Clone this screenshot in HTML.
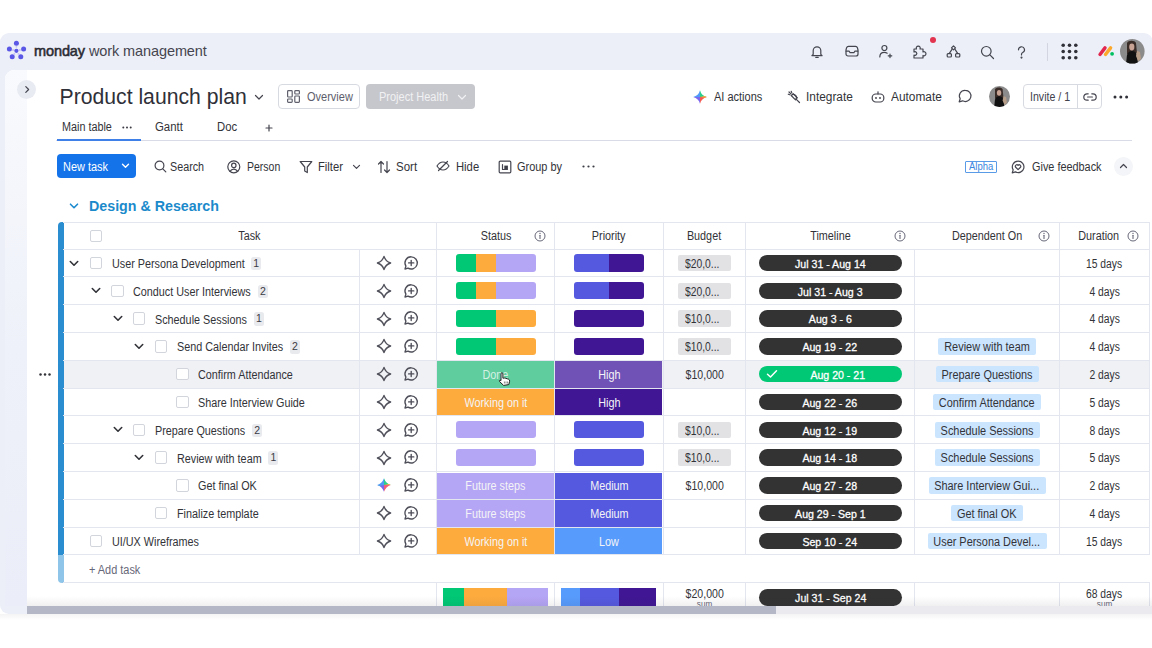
<!DOCTYPE html>
<html><head><meta charset="utf-8">
<style>
*{box-sizing:border-box;margin:0;padding:0}
html,body{width:1152px;height:648px;overflow:hidden;background:#fff;font-family:"Liberation Sans",sans-serif;color:#323338}
.a{position:absolute}
.t{position:absolute;white-space:nowrap;font-size:12px;line-height:14px}
svg{position:absolute;overflow:visible}
.ic{fill:none;stroke:#44454f;stroke-width:1.2;stroke-linecap:round;stroke-linejoin:round}
#frame{position:absolute;left:0;top:33px;width:1153px;height:581px;background:#eceff8;border-radius:9px}
#panel{position:absolute;left:5px;top:70px;width:1148px;height:536px;background:#fff;border-radius:9px 0 0 0;overflow:hidden}
#side{position:absolute;left:0;top:0;width:22px;height:536px;background:linear-gradient(180deg,#f9fafd 0,#f3f5fb 150px,#eef1f9 280px,#ebeef8 100%)}
.btn{position:absolute;border:1px solid #d8dae2;border-radius:4px;height:24.6px}
.hi{position:absolute;white-space:nowrap;font-size:12.5px;line-height:16px;color:#323338;transform:scaleX(.88);transform-origin:0 50%}
</style></head><body>
<div id="frame"></div>
<div id="panel"><div id="side"></div></div>

<!-- ===== top bar ===== -->
<svg style="left:6px;top:40px" width="22" height="22" viewBox="0 0 22 22">
  <g fill="#5b57e6"><circle cx="10.4" cy="3.3" r="2.5"/><circle cx="3.4" cy="8.9" r="2.5"/><circle cx="17.6" cy="8.9" r="2.5"/><circle cx="6.2" cy="16.8" r="2.5"/><circle cx="14.8" cy="16.8" r="2.5"/><circle cx="10.4" cy="10.8" r="2.1"/></g>
  <g fill="#b3acf5" opacity=".7"><circle cx="7" cy="10" r="1"/><circle cx="13.8" cy="10" r="1"/><circle cx="10.4" cy="6.8" r=".9"/><circle cx="8.3" cy="13.9" r=".9"/><circle cx="12.5" cy="13.9" r=".9"/></g>
</svg>
<div class="t" style="left:34px;top:42.5px;font-size:14.5px;line-height:17px;letter-spacing:-0.1px"><span style="color:#2b2b33;-webkit-text-stroke:0.55px #2b2b33">monday</span> <span style="color:#45454f">work management</span></div>

<svg style="left:810px;top:43.8px" width="14" height="15" viewBox="0 0 14 15" class="ic"><path d="M3.2 10.3V6.6a3.8 3.8 0 0 1 7.6 0v3.7l1.3 1.3H1.9z"/><path d="M5.8 13.4h2.4"/></svg>
<svg style="left:844.5px;top:45px" width="14" height="12" viewBox="0 0 14 12" class="ic"><path d="M3.5 1.3h7a2 2 0 0 1 1.9 1.4L13 5v4a2 2 0 0 1-2 2H3a2 2 0 0 1-2-2V5l.6-2.3a2 2 0 0 1 1.9-1.4z"/><path d="M1.2 6.2h3l.9 1.5h3.8l.9-1.5h3"/></svg>
<svg style="left:878px;top:43.8px" width="15" height="15" viewBox="0 0 15 15" class="ic"><circle cx="6.4" cy="4" r="2.5"/><path d="M1.8 13c0-2.8 2-4.6 4.6-4.6 1.1 0 2 .3 2.8.8"/><path d="M10.2 11.8h3.6M12 10v3.6"/></svg>
<svg style="left:912px;top:43.8px" width="15" height="15" viewBox="0 0 15 15" class="ic"><path d="M2 5h2.5a2 2 0 1 1 3.5 0H11v3a2 2 0 1 1 0 3.5V14H2v-3a1.8 1.8 0 1 0 0-3z"/></svg>
<div class="a" style="left:929.6px;top:37.3px;width:6.2px;height:6.2px;border-radius:3.1px;background:#e2334f"></div>
<svg style="left:946px;top:43.8px" width="15" height="15" viewBox="0 0 15 15" class="ic"><path d="M7.5 1.8l2 2-2 2-2-2z"/><path d="M6 5.3L3.3 9.3M9 5.3l2.7 4"/><rect x="1.2" y="9.6" width="4.2" height="3.4" rx=".9"/><rect x="9.6" y="9.6" width="4.2" height="3.4" rx=".9"/></svg>
<svg style="left:980px;top:44.5px" width="15" height="15" viewBox="0 0 15 15" class="ic"><circle cx="6.3" cy="6.3" r="4.8"/><path d="M9.9 9.9l3.6 3.6"/></svg>
<svg style="left:1015.5px;top:45.5px" width="11" height="13" viewBox="0 0 11 13" class="ic"><path d="M2.5 3.8a3 3 0 1 1 4.2 2.7c-.8.4-1.2.9-1.2 1.8v.7"/><circle cx="5.5" cy="11.6" r=".45" fill="#44454f"/></svg>
<div class="a" style="left:1046.5px;top:43px;width:1px;height:18px;background:#d3d6e0"></div>
<svg style="left:1060.5px;top:43px" width="17" height="17" viewBox="0 0 17 17"><g fill="#2f3038"><circle cx="2.2" cy="2.2" r="1.8"/><circle cx="8.5" cy="2.2" r="1.8"/><circle cx="14.8" cy="2.2" r="1.8"/><circle cx="2.2" cy="8.5" r="1.8"/><circle cx="8.5" cy="8.5" r="1.8"/><circle cx="14.8" cy="8.5" r="1.8"/><circle cx="2.2" cy="14.8" r="1.8"/><circle cx="8.5" cy="14.8" r="1.8"/><circle cx="14.8" cy="14.8" r="1.8"/></g></svg>
<svg style="left:1096px;top:44px" width="20" height="13" viewBox="0 0 20 13"><path d="M4 10.5L9 3.9" stroke="#e2274f" stroke-width="3.4" stroke-linecap="round"/><path d="M9.5 10.5L14.6 3.9" stroke="#fca82c" stroke-width="3.4" stroke-linecap="round"/><circle cx="16.1" cy="9.8" r="1.9" fill="#00c061"/></svg>
<svg style="left:1120.3px;top:39px" width="24.6" height="24.6" viewBox="0 0 24.6 24.6"><defs><clipPath id="av1"><circle cx="12.3" cy="12.3" r="12.3"/></clipPath></defs><g clip-path="url(#av1)"><rect width="25" height="25" fill="#8c8b8b"/><path d="M7 4c1-3 8-3 9 0l1 10-10 1z" fill="#3a2d28"/><ellipse cx="11.8" cy="8" rx="2.6" ry="3.4" fill="#c9a394"/><path d="M6 25l1-9c1-3 3-4 5-4s4 1 5 4l1 9z" fill="#111"/><path d="M17 12l3 1 1 7-3 2-2-5z" fill="#b79e88"/></g></svg>

<!-- ===== board header ===== -->
<div class="a" style="left:16.5px;top:79.5px;width:19.5px;height:19.5px;border-radius:50%;background:#e9ebf3"></div>
<svg style="left:22.5px;top:85px" width="8" height="9" viewBox="0 0 8 9" class="ic"><path d="M2.8 1.6l2.8 2.9-2.8 2.9"/></svg>
<div class="t" style="left:59.5px;top:83.5px;font-size:21.2px;line-height:25px;color:#2f3038">Product launch plan</div>
<svg style="left:254px;top:93.5px" width="10" height="7" viewBox="0 0 10 7" class="ic"><path d="M1.5 1.5l3.5 3.5 3.5-3.5"/></svg>

<div class="btn" style="left:278.2px;top:84px;width:81.5px"></div>
<svg style="left:286.8px;top:89.8px;stroke:#5f606c" width="13" height="13" viewBox="0 0 13 13" class="ic"><rect x=".6" y=".6" width="4.6" height="6.4" rx=".8"/><rect x=".6" y="9" width="4.6" height="3.4" rx=".8"/><rect x="7.8" y=".6" width="4.6" height="3.4" rx=".8"/><rect x="7.8" y="6" width="4.6" height="6.4" rx=".8"/></svg>
<div class="hi" style="left:307.4px;top:88.5px;color:#5d5e6c;transform:scaleX(.88)">Overview</div>

<div class="a" style="left:366px;top:84px;width:109px;height:24.6px;border-radius:4px;background:#c6c7cc"></div>
<div class="hi" style="left:378.5px;top:88.5px;color:#f1f1f3">Project Health</div>
<svg style="left:456.5px;top:93.5px;stroke:#f1f1f3" width="10" height="7" viewBox="0 0 10 7" class="ic"><path d="M1.5 1.5l3.5 3.5 3.5-3.5"/></svg>

<svg style="left:692.5px;top:89.5px" width="14" height="14" viewBox="0 0 14 14"><defs><clipPath id="aist"><path d="M7 0.2Q8.4 5.6 13.8 7 8.4 8.4 7 13.8 5.6 8.4 0.2 7 5.6 5.6 7 0.2z"/></clipPath></defs><g clip-path="url(#aist)"><rect x="0" y="0" width="7" height="7" fill="#4f9bf5"/><rect x="7" y="0" width="7" height="7" fill="#2ccf8e"/><rect x="7" y="7" width="7" height="7" fill="#f25a55"/><rect x="0" y="7" width="7" height="7" fill="#7d66ee"/><path d="M7 7L14 5.5V8z" fill="#ffa53a"/></g></svg>
<div class="hi" style="left:713.5px;top:88.5px">AI actions</div>
<svg style="left:786.5px;top:89.5px" width="14" height="14" viewBox="0 0 14 14" class="ic"><path d="M4.2 5.5l4.3 4.3a3.1 3.1 0 0 0 .3-4.1L8.3 5.2a3.1 3.1 0 0 0-4.1.3z"/><path d="M6.1 3.6l4.3 4.3M9.3 9.3l3.2 3.2M2 2l1.7 1.7M4.2 1.3l.6 1.6M1.3 4.2l1.6.6"/></svg>
<div class="hi" style="left:806px;top:88.5px;transform:scaleX(.95)">Integrate</div>
<svg style="left:870.5px;top:89.5px" width="14" height="14" viewBox="0 0 14 14" class="ic"><rect x="1.2" y="4" width="11.6" height="8" rx="3.6"/><path d="M7 4V1.8"/><circle cx="5" cy="8" r=".9" fill="#3b3c45" stroke="none"/><circle cx="9" cy="8" r=".9" fill="#3b3c45" stroke="none"/></svg>
<div class="hi" style="left:890.5px;top:88.5px;transform:scaleX(.95)">Automate</div>
<svg style="left:957.5px;top:89px" width="14" height="14" viewBox="0 0 14 14" class="ic"><path d="M7.3 1.3a5.6 5.6 0 1 1-2.7 10.5L1.2 12.8l1-3a5.6 5.6 0 0 1 5.1-8.5z"/></svg>
<svg style="left:988.5px;top:85.5px" width="21" height="21" viewBox="0 0 24.6 24.6"><defs><clipPath id="av2"><circle cx="12.3" cy="12.3" r="12.3"/></clipPath></defs><g clip-path="url(#av2)"><rect width="25" height="25" fill="#8c8b8b"/><path d="M7 4c1-3 8-3 9 0l1 10-10 1z" fill="#3a2d28"/><ellipse cx="11.8" cy="8" rx="2.6" ry="3.4" fill="#c9a394"/><path d="M6 25l1-9c1-3 3-4 5-4s4 1 5 4l1 9z" fill="#111"/><path d="M17 12l3 1 1 7-3 2-2-5z" fill="#b79e88"/></g></svg>

<div class="btn" style="left:1023px;top:84px;width:79px"></div>
<div class="a" style="left:1077px;top:84.5px;width:1px;height:23.6px;background:#d8dae2"></div>
<div class="hi" style="left:1030px;top:88.5px;transform:scaleX(.85);color:#41424c">Invite / 1</div>
<svg style="left:1082.5px;top:90.5px" width="14" height="12" viewBox="0 0 14 12" class="ic"><path d="M5.2 2.8H4a3.2 3.2 0 0 0 0 6.4h1.2M8.8 2.8H10a3.2 3.2 0 0 1 0 6.4H8.8M4.6 6h4.8"/></svg>
<svg style="left:1112.5px;top:94.5px" width="16" height="4" viewBox="0 0 16 4"><g fill="#2f3038"><circle cx="2" cy="2" r="1.5"/><circle cx="7.8" cy="2" r="1.5"/><circle cx="13.6" cy="2" r="1.5"/></g></svg>

<!-- tabs -->
<div class="hi" style="left:62px;top:119px;font-size:12px;transform:scaleX(.9)">Main table</div>
<svg style="left:121.5px;top:125.5px" width="10" height="3" viewBox="0 0 10 3"><g fill="#3b3c45"><circle cx="1.3" cy="1.5" r="1"/><circle cx="5" cy="1.5" r="1"/><circle cx="8.7" cy="1.5" r="1"/></g></svg>
<div class="hi" style="left:155px;top:119px;font-size:12px;transform:scaleX(.95)">Gantt</div>
<div class="hi" style="left:217px;top:119px;font-size:12px;transform:scaleX(.94)">Doc</div>
<svg style="left:264.5px;top:123.5px" width="8" height="8" viewBox="0 0 8 8" class="ic"><path d="M4 1v6M1 4h6"/></svg>
<div class="a" style="left:56px;top:140px;width:1076px;height:1px;background:#d9dce6"></div>
<div class="a" style="left:56.5px;top:139.2px;width:84.5px;height:2px;background:#3f80e8"></div>

<!-- toolbar -->
<div class="a" style="left:56.5px;top:153.7px;width:79px;height:24.3px;border-radius:4px;background:#1573e9"></div>
<div class="hi" style="left:63px;top:159px;color:#fff;transform:scaleX(.875)">New task</div>
<svg style="left:120.5px;top:163px;stroke:#fff;stroke-width:1.4" width="9" height="6" viewBox="0 0 9 6" class="ic"><path d="M1.5 1.3l3 3 3-3"/></svg>
<svg style="left:153.5px;top:159.5px" width="13" height="13" viewBox="0 0 13 13" class="ic"><circle cx="5.5" cy="5.5" r="4.4"/><path d="M8.8 8.8l3 3"/></svg>
<div class="hi" style="left:170.3px;top:159px;transform:scaleX(.86)">Search</div>
<svg style="left:226.5px;top:159.5px" width="14" height="14" viewBox="0 0 14 14" class="ic"><circle cx="6.8" cy="6.8" r="6"/><circle cx="6.8" cy="5.4" r="2.2"/><path d="M3 11.4c1-1.6 2.3-2.3 3.8-2.3s2.8.7 3.8 2.3"/></svg>
<div class="hi" style="left:246.6px;top:159px;transform:scaleX(.84)">Person</div>
<svg style="left:298.5px;top:159.5px" width="14" height="14" viewBox="0 0 14 14" class="ic"><path d="M1.2 1.5h11.6L8.3 7v5.6L5.7 11V7z"/></svg>
<div class="hi" style="left:318.2px;top:159px;transform:scaleX(.9)">Filter</div>
<svg style="left:351.5px;top:164px" width="9" height="6" viewBox="0 0 9 6" class="ic"><path d="M1.5 1.3l3 3 3-3"/></svg>
<svg style="left:376.5px;top:159.5px" width="14" height="14" viewBox="0 0 14 14" class="ic"><path d="M4 12.5V1.5M1.5 4L4 1.5 6.5 4M10 1.5v11M7.5 10l2.5 2.5 2.5-2.5"/></svg>
<div class="hi" style="left:395.5px;top:159px;transform:scaleX(.92)">Sort</div>
<svg style="left:435.5px;top:160px" width="14" height="12" viewBox="0 0 14 12" class="ic"><path d="M1 6c1.6-2.6 3.6-4 6-4s4.4 1.4 6 4c-1.6 2.6-3.6 4-6 4S2.6 8.6 1 6z"/><path d="M2.5 10.5L11.5 1.5"/></svg>
<div class="hi" style="left:455.5px;top:159px;transform:scaleX(.9)">Hide</div>
<svg style="left:498px;top:159.5px" width="14" height="14" viewBox="0 0 14 14" class="ic"><rect x="1.2" y="1.2" width="11.6" height="11.6" rx="1"/><path d="M4.5 4.5v5h5"/><rect x="6.3" y="5.6" width="3.6" height="3.4" fill="#3b3c45" stroke="none"/></svg>
<div class="hi" style="left:516.5px;top:159px;transform:scaleX(.875)">Group by</div>
<svg style="left:581.5px;top:165px" width="13" height="3" viewBox="0 0 13 3"><g fill="#3b3c45"><circle cx="1.5" cy="1.5" r="1.1"/><circle cx="6.5" cy="1.5" r="1.1"/><circle cx="11.5" cy="1.5" r="1.1"/></g></svg>

<div class="a" style="left:965px;top:160.5px;width:31.5px;height:12.5px;border:1px solid #5a9be8;border-radius:1px"></div>
<div class="t" style="left:969px;top:161px;font-size:10.5px;line-height:11px;color:#3b86e0;transform:scaleX(.9);transform-origin:0 50%">Alpha</div>
<svg style="left:1010.5px;top:159.5px" width="14" height="14" viewBox="0 0 14 14" class="ic"><path d="M7.2 1.2a5.7 5.7 0 1 1-2.7 10.7L1.2 12.9l1-3a5.7 5.7 0 0 1 5-8.7z"/><path d="M7.1 9.6L4.7 7.3a1.5 1.5 0 0 1 2.4-1.9 1.5 1.5 0 0 1 2.4 1.9z"/></svg>
<div class="hi" style="left:1032px;top:159px;transform:scaleX(.87)">Give feedback</div>
<div class="a" style="left:1113.5px;top:156.5px;width:19.5px;height:19.5px;border-radius:50%;background:#f4f5f8"></div>
<svg style="left:1119px;top:163px" width="9" height="6" viewBox="0 0 9 6" class="ic"><path d="M1.5 4.5l3-3 3 3"/></svg>

<!-- group title -->
<svg style="left:68.5px;top:203px;stroke:#1d8bcf;stroke-width:1.6" width="10" height="6" viewBox="0 0 10 6" class="ic"><path d="M1.5 1.2l3.5 3.5 3.5-3.5"/></svg>
<div class="t" style="left:89px;top:196.5px;font-size:15px;line-height:18px;color:#1b8acb;font-weight:bold;transform:scaleX(.95);transform-origin:0 50%">Design &amp; Research</div>

<div class="a" style="left:63px;top:360.3px;width:1086px;height:27.8px;background:#f0f1f5;"></div>
<svg style="left:39px;top:372.7px" width="12" height="3" viewBox="0 0 12 3"><g fill="#323338"><circle cx="1.5" cy="1.5" r="1.25"/><circle cx="6" cy="1.5" r="1.25"/><circle cx="10.5" cy="1.5" r="1.25"/></g></svg>
<div class="a" style="left:58px;top:222.3px;width:5.5px;height:332.6px;background:#2a8dd0;border-radius:4px 0 0 0"></div>
<div class="a" style="left:58px;top:554.9px;width:5.5px;height:27.8px;background:#8ec5e8;border-radius:0 0 0 4px"></div>
<div class="a" style="left:63px;top:221.8px;width:1087px;height:1px;background:#e3e6ee;"></div>
<div class="a" style="left:63px;top:248.6px;width:1087px;height:1px;background:#e3e6ee;"></div>
<div class="a" style="left:63px;top:276.4px;width:1087px;height:1px;background:#e3e6ee;"></div>
<div class="a" style="left:63px;top:304.2px;width:1087px;height:1px;background:#e3e6ee;"></div>
<div class="a" style="left:63px;top:332px;width:1087px;height:1px;background:#e3e6ee;"></div>
<div class="a" style="left:63px;top:359.8px;width:1087px;height:1px;background:#e3e6ee;"></div>
<div class="a" style="left:63px;top:387.6px;width:1087px;height:1px;background:#e3e6ee;"></div>
<div class="a" style="left:63px;top:415.4px;width:1087px;height:1px;background:#e3e6ee;"></div>
<div class="a" style="left:63px;top:443.2px;width:1087px;height:1px;background:#e3e6ee;"></div>
<div class="a" style="left:63px;top:471px;width:1087px;height:1px;background:#e3e6ee;"></div>
<div class="a" style="left:63px;top:498.8px;width:1087px;height:1px;background:#e3e6ee;"></div>
<div class="a" style="left:63px;top:526.6px;width:1087px;height:1px;background:#e3e6ee;"></div>
<div class="a" style="left:63px;top:554.4px;width:1087px;height:1px;background:#e3e6ee;"></div>
<div class="a" style="left:63px;top:582.2px;width:1087px;height:1px;background:#e3e6ee;"></div>
<div class="a" style="left:436px;top:222.3px;width:1px;height:332.6px;background:#e3e6ee;"></div>
<div class="a" style="left:554.1px;top:222.3px;width:1px;height:332.6px;background:#e3e6ee;"></div>
<div class="a" style="left:662.6px;top:222.3px;width:1px;height:332.6px;background:#e3e6ee;"></div>
<div class="a" style="left:745.2px;top:222.3px;width:1px;height:332.6px;background:#e3e6ee;"></div>
<div class="a" style="left:914.3px;top:249.1px;width:1px;height:305.8px;background:#e3e6ee;"></div>
<div class="a" style="left:1059.2px;top:222.3px;width:1px;height:332.6px;background:#e3e6ee;"></div>
<div class="a" style="left:1148.5px;top:222.3px;width:1px;height:332.6px;background:#e3e6ee;"></div>
<div class="a" style="left:359.3px;top:249.1px;width:1px;height:305.8px;background:#e3e6ee;"></div>
<div class="a" style="left:436px;top:582.7px;width:1px;height:23.3px;background:#e3e6ee;"></div>
<div class="a" style="left:554.1px;top:582.7px;width:1px;height:23.3px;background:#e3e6ee;"></div>
<div class="a" style="left:662.6px;top:582.7px;width:1px;height:23.3px;background:#e3e6ee;"></div>
<div class="a" style="left:745.2px;top:582.7px;width:1px;height:23.3px;background:#e3e6ee;"></div>
<div class="a" style="left:914.3px;top:582.7px;width:1px;height:23.3px;background:#e3e6ee;"></div>
<div class="a" style="left:1059.2px;top:582.7px;width:1px;height:23.3px;background:#e3e6ee;"></div>
<div class="a" style="left:1148.5px;top:582.7px;width:1px;height:23.3px;background:#e3e6ee;"></div>
<div class="a" style="left:89.6px;top:229.8px;width:12.4px;height:12.4px;border:1px solid #d3d5dd;border-radius:2px;background:#fff"></div>
<div class="t" style="left:99.75px;top:228px;width:300px;text-align:center;font-size:12px;line-height:16px;color:#323338;font-weight:normal;"><span style="display:inline-block;transform:scaleX(0.9)">Task</span></div>
<div class="t" style="left:345.6px;top:228px;width:300px;text-align:center;font-size:12px;line-height:16px;color:#323338;font-weight:normal;"><span style="display:inline-block;transform:scaleX(0.9)">Status</span></div>
<svg style="left:533.6px;top:230px" width="12" height="12" viewBox="0 0 12 12"><circle cx="6" cy="6" r="5" fill="none" stroke="#676879" stroke-width="1"/><path d="M6 5.2v3.3" stroke="#676879" stroke-width="1.1" stroke-linecap="round"/><circle cx="6" cy="3.4" r=".7" fill="#676879"/></svg>
<div class="t" style="left:458.85px;top:228px;width:300px;text-align:center;font-size:12px;line-height:16px;color:#323338;font-weight:normal;"><span style="display:inline-block;transform:scaleX(0.9)">Priority</span></div>
<div class="t" style="left:554.4px;top:228px;width:300px;text-align:center;font-size:12px;line-height:16px;color:#323338;font-weight:normal;"><span style="display:inline-block;transform:scaleX(0.9)">Budget</span></div>
<div class="t" style="left:680.2px;top:228px;width:300px;text-align:center;font-size:12px;line-height:16px;color:#323338;font-weight:normal;"><span style="display:inline-block;transform:scaleX(0.9)">Timeline</span></div>
<svg style="left:893.6px;top:230px" width="12" height="12" viewBox="0 0 12 12"><circle cx="6" cy="6" r="5" fill="none" stroke="#676879" stroke-width="1"/><path d="M6 5.2v3.3" stroke="#676879" stroke-width="1.1" stroke-linecap="round"/><circle cx="6" cy="3.4" r=".7" fill="#676879"/></svg>
<div class="t" style="left:836.9px;top:228px;width:300px;text-align:center;font-size:12px;line-height:16px;color:#323338;font-weight:normal;"><span style="display:inline-block;transform:scaleX(0.9)">Dependent On</span></div>
<svg style="left:1038.4px;top:230px" width="12" height="12" viewBox="0 0 12 12"><circle cx="6" cy="6" r="5" fill="none" stroke="#676879" stroke-width="1"/><path d="M6 5.2v3.3" stroke="#676879" stroke-width="1.1" stroke-linecap="round"/><circle cx="6" cy="3.4" r=".7" fill="#676879"/></svg>
<div class="t" style="left:948.8px;top:228px;width:300px;text-align:center;font-size:12px;line-height:16px;color:#323338;font-weight:normal;"><span style="display:inline-block;transform:scaleX(0.9)">Duration</span></div>
<svg style="left:1127.2px;top:230px" width="12" height="12" viewBox="0 0 12 12"><circle cx="6" cy="6" r="5" fill="none" stroke="#676879" stroke-width="1"/><path d="M6 5.2v3.3" stroke="#676879" stroke-width="1.1" stroke-linecap="round"/><circle cx="6" cy="3.4" r=".7" fill="#676879"/></svg>
<svg style="left:69.2px;top:259.5px" width="10" height="7" viewBox="0 0 10 7"><path d="M1.3 1.5L5 5.2 8.7 1.5" fill="none" stroke="#323338" stroke-width="1.6" stroke-linecap="round" stroke-linejoin="round"/></svg>
<div class="a" style="left:89.6px;top:256.8px;width:12.4px;height:12.4px;border:1px solid #d3d5dd;border-radius:2px;background:#fff"></div>
<div class="t" style="left:111.6px;top:256px;font-size:12px;line-height:16px;color:#323338;font-weight:normal;transform:scaleX(0.9);transform-origin:0 50%;">User Persona Development</div>
<div class="a" style="left:251.26px;top:256.7px;width:10px;height:13.6px;border-radius:2.5px;background:#e9eaee;font-size:10.5px;line-height:13.6px;text-align:center;color:#3a3b44">1</div>
<svg style="left:376.1px;top:255px" width="16" height="16" viewBox="0 0 16 16"><path d="M8 1.4Q9.6 6.4 14.6 8 9.6 9.6 8 14.6 6.4 9.6 1.4 8 6.4 6.4 8 1.4z" fill="none" stroke="#4e4f59" stroke-width="1.35" stroke-linejoin="round"/></svg>
<svg style="left:402.9px;top:254.7px" width="16" height="16" viewBox="0 0 16 16"><path d="M8.2 1.8a6.1 6.1 0 1 1-3.2 11.3L2 14l.9-2.9A6.1 6.1 0 0 1 8.2 1.8z" fill="none" stroke="#4e4f59" stroke-width="1.35" stroke-linejoin="round"/><path d="M8.2 5.3v5.2M5.6 7.9h5.2" stroke="#4e4f59" stroke-width="1.35" stroke-linecap="round"/></svg>
<div class="a" style="left:455.6px;top:254.4px;width:80.2px;height:17.2px;border-radius:3px;overflow:hidden;display:flex"><div style="width:20px;height:100%;background:#00c875"></div><div style="width:20px;height:100%;background:#fdab3d"></div><div style="width:40.2px;height:100%;background:#b5a5f5"></div></div>
<div class="a" style="left:573.6px;top:254.4px;width:70.5px;height:17.2px;border-radius:3px;overflow:hidden;display:flex"><div style="width:35.5px;height:100%;background:#5559df"></div><div style="width:35px;height:100%;background:#401694"></div></div>
<div class="a" style="left:678.2px;top:254.8px;width:52.5px;height:16.5px;border-radius:2px;background:#e2e2e5"></div>
<div class="t" style="left:684.5px;top:255.8px;font-size:12px;line-height:16px;color:#323338;font-weight:normal;transform:scaleX(0.86);transform-origin:0 50%;">$20,0...</div>
<div class="a" style="left:758.6px;top:254.7px;width:143.1px;height:16.6px;border-radius:8.3px;background:#333333"></div>
<div class="t" style="left:680.2px;top:255.8px;width:300px;text-align:center;font-size:11.5px;line-height:16px;color:#fff;font-weight:normal;-webkit-text-stroke:0.3px #fff"><span style="display:inline-block;transform:scaleX(0.92)">Jul 31 - Aug 14</span></div>
<div class="t" style="left:954.4px;top:255.8px;width:300px;text-align:center;font-size:12px;line-height:16px;color:#323338;font-weight:normal;"><span style="display:inline-block;transform:scaleX(0.86)">15 days</span></div>
<svg style="left:90.9px;top:287.3px" width="10" height="7" viewBox="0 0 10 7"><path d="M1.3 1.5L5 5.2 8.7 1.5" fill="none" stroke="#323338" stroke-width="1.6" stroke-linecap="round" stroke-linejoin="round"/></svg>
<div class="a" style="left:111.3px;top:284.6px;width:12.4px;height:12.4px;border:1px solid #d3d5dd;border-radius:2px;background:#fff"></div>
<div class="t" style="left:133.3px;top:283.8px;font-size:12px;line-height:16px;color:#323338;font-weight:normal;transform:scaleX(0.9);transform-origin:0 50%;">Conduct User Interviews</div>
<div class="a" style="left:257.95px;top:284.5px;width:10px;height:13.6px;border-radius:2.5px;background:#e9eaee;font-size:10.5px;line-height:13.6px;text-align:center;color:#3a3b44">2</div>
<svg style="left:376.1px;top:282.8px" width="16" height="16" viewBox="0 0 16 16"><path d="M8 1.4Q9.6 6.4 14.6 8 9.6 9.6 8 14.6 6.4 9.6 1.4 8 6.4 6.4 8 1.4z" fill="none" stroke="#4e4f59" stroke-width="1.35" stroke-linejoin="round"/></svg>
<svg style="left:402.9px;top:282.5px" width="16" height="16" viewBox="0 0 16 16"><path d="M8.2 1.8a6.1 6.1 0 1 1-3.2 11.3L2 14l.9-2.9A6.1 6.1 0 0 1 8.2 1.8z" fill="none" stroke="#4e4f59" stroke-width="1.35" stroke-linejoin="round"/><path d="M8.2 5.3v5.2M5.6 7.9h5.2" stroke="#4e4f59" stroke-width="1.35" stroke-linecap="round"/></svg>
<div class="a" style="left:455.6px;top:282.2px;width:80.2px;height:17.2px;border-radius:3px;overflow:hidden;display:flex"><div style="width:20px;height:100%;background:#00c875"></div><div style="width:20px;height:100%;background:#fdab3d"></div><div style="width:40.2px;height:100%;background:#b5a5f5"></div></div>
<div class="a" style="left:573.6px;top:282.2px;width:70.5px;height:17.2px;border-radius:3px;overflow:hidden;display:flex"><div style="width:35.5px;height:100%;background:#5559df"></div><div style="width:35px;height:100%;background:#401694"></div></div>
<div class="a" style="left:678.2px;top:282.6px;width:52.5px;height:16.5px;border-radius:2px;background:#e2e2e5"></div>
<div class="t" style="left:684.5px;top:283.6px;font-size:12px;line-height:16px;color:#323338;font-weight:normal;transform:scaleX(0.86);transform-origin:0 50%;">$20,0...</div>
<div class="a" style="left:758.6px;top:282.5px;width:143.1px;height:16.6px;border-radius:8.3px;background:#333333"></div>
<div class="t" style="left:680.2px;top:283.6px;width:300px;text-align:center;font-size:11.5px;line-height:16px;color:#fff;font-weight:normal;-webkit-text-stroke:0.3px #fff"><span style="display:inline-block;transform:scaleX(0.92)">Jul 31 - Aug 3</span></div>
<div class="t" style="left:954.4px;top:283.6px;width:300px;text-align:center;font-size:12px;line-height:16px;color:#323338;font-weight:normal;"><span style="display:inline-block;transform:scaleX(0.86)">4 days</span></div>
<svg style="left:112.6px;top:315.1px" width="10" height="7" viewBox="0 0 10 7"><path d="M1.3 1.5L5 5.2 8.7 1.5" fill="none" stroke="#323338" stroke-width="1.6" stroke-linecap="round" stroke-linejoin="round"/></svg>
<div class="a" style="left:133px;top:312.4px;width:12.4px;height:12.4px;border:1px solid #d3d5dd;border-radius:2px;background:#fff"></div>
<div class="t" style="left:155px;top:311.6px;font-size:12px;line-height:16px;color:#323338;font-weight:normal;transform:scaleX(0.9);transform-origin:0 50%;">Schedule Sessions</div>
<div class="a" style="left:253.86px;top:312.3px;width:10px;height:13.6px;border-radius:2.5px;background:#e9eaee;font-size:10.5px;line-height:13.6px;text-align:center;color:#3a3b44">1</div>
<svg style="left:376.1px;top:310.6px" width="16" height="16" viewBox="0 0 16 16"><path d="M8 1.4Q9.6 6.4 14.6 8 9.6 9.6 8 14.6 6.4 9.6 1.4 8 6.4 6.4 8 1.4z" fill="none" stroke="#4e4f59" stroke-width="1.35" stroke-linejoin="round"/></svg>
<svg style="left:402.9px;top:310.3px" width="16" height="16" viewBox="0 0 16 16"><path d="M8.2 1.8a6.1 6.1 0 1 1-3.2 11.3L2 14l.9-2.9A6.1 6.1 0 0 1 8.2 1.8z" fill="none" stroke="#4e4f59" stroke-width="1.35" stroke-linejoin="round"/><path d="M8.2 5.3v5.2M5.6 7.9h5.2" stroke="#4e4f59" stroke-width="1.35" stroke-linecap="round"/></svg>
<div class="a" style="left:455.6px;top:310px;width:80.2px;height:17.2px;border-radius:3px;overflow:hidden;display:flex"><div style="width:40px;height:100%;background:#00c875"></div><div style="width:40.2px;height:100%;background:#fdab3d"></div></div>
<div class="a" style="left:573.6px;top:310px;width:70.5px;height:17.2px;border-radius:3px;overflow:hidden;display:flex"><div style="width:70.5px;height:100%;background:#401694"></div></div>
<div class="a" style="left:678.2px;top:310.4px;width:52.5px;height:16.5px;border-radius:2px;background:#e2e2e5"></div>
<div class="t" style="left:684.5px;top:311.4px;font-size:12px;line-height:16px;color:#323338;font-weight:normal;transform:scaleX(0.86);transform-origin:0 50%;">$10,0...</div>
<div class="a" style="left:758.6px;top:310.3px;width:143.1px;height:16.6px;border-radius:8.3px;background:#333333"></div>
<div class="t" style="left:680.2px;top:311.4px;width:300px;text-align:center;font-size:11.5px;line-height:16px;color:#fff;font-weight:normal;-webkit-text-stroke:0.3px #fff"><span style="display:inline-block;transform:scaleX(0.92)">Aug 3 - 6</span></div>
<div class="t" style="left:954.4px;top:311.4px;width:300px;text-align:center;font-size:12px;line-height:16px;color:#323338;font-weight:normal;"><span style="display:inline-block;transform:scaleX(0.86)">4 days</span></div>
<svg style="left:134.3px;top:342.9px" width="10" height="7" viewBox="0 0 10 7"><path d="M1.3 1.5L5 5.2 8.7 1.5" fill="none" stroke="#323338" stroke-width="1.6" stroke-linecap="round" stroke-linejoin="round"/></svg>
<div class="a" style="left:154.7px;top:340.2px;width:12.4px;height:12.4px;border:1px solid #d3d5dd;border-radius:2px;background:#fff"></div>
<div class="t" style="left:176.7px;top:339.4px;font-size:12px;line-height:16px;color:#323338;font-weight:normal;transform:scaleX(0.9);transform-origin:0 50%;">Send Calendar Invites</div>
<div class="a" style="left:289.97px;top:340.1px;width:10px;height:13.6px;border-radius:2.5px;background:#e9eaee;font-size:10.5px;line-height:13.6px;text-align:center;color:#3a3b44">2</div>
<svg style="left:376.1px;top:338.4px" width="16" height="16" viewBox="0 0 16 16"><path d="M8 1.4Q9.6 6.4 14.6 8 9.6 9.6 8 14.6 6.4 9.6 1.4 8 6.4 6.4 8 1.4z" fill="none" stroke="#4e4f59" stroke-width="1.35" stroke-linejoin="round"/></svg>
<svg style="left:402.9px;top:338.1px" width="16" height="16" viewBox="0 0 16 16"><path d="M8.2 1.8a6.1 6.1 0 1 1-3.2 11.3L2 14l.9-2.9A6.1 6.1 0 0 1 8.2 1.8z" fill="none" stroke="#4e4f59" stroke-width="1.35" stroke-linejoin="round"/><path d="M8.2 5.3v5.2M5.6 7.9h5.2" stroke="#4e4f59" stroke-width="1.35" stroke-linecap="round"/></svg>
<div class="a" style="left:455.6px;top:337.8px;width:80.2px;height:17.2px;border-radius:3px;overflow:hidden;display:flex"><div style="width:40px;height:100%;background:#00c875"></div><div style="width:40.2px;height:100%;background:#fdab3d"></div></div>
<div class="a" style="left:573.6px;top:337.8px;width:70.5px;height:17.2px;border-radius:3px;overflow:hidden;display:flex"><div style="width:70.5px;height:100%;background:#401694"></div></div>
<div class="a" style="left:678.2px;top:338.2px;width:52.5px;height:16.5px;border-radius:2px;background:#e2e2e5"></div>
<div class="t" style="left:684.5px;top:339.2px;font-size:12px;line-height:16px;color:#323338;font-weight:normal;transform:scaleX(0.86);transform-origin:0 50%;">$10,0...</div>
<div class="a" style="left:758.6px;top:338.1px;width:143.1px;height:16.6px;border-radius:8.3px;background:#333333"></div>
<div class="t" style="left:680.2px;top:339.2px;width:300px;text-align:center;font-size:11.5px;line-height:16px;color:#fff;font-weight:normal;-webkit-text-stroke:0.3px #fff"><span style="display:inline-block;transform:scaleX(0.92)">Aug 19 - 22</span></div>
<div class="a dep" style="left:938.32px;top:338.1px;width:97.57px;height:16.6px;background:#cce5ff;border-radius:2px"></div>
<div class="t" style="left:837.1px;top:339.2px;width:300px;text-align:center;font-size:12px;line-height:16px;color:#323338;font-weight:normal;"><span style="display:inline-block;transform:scaleX(0.91)">Review with team</span></div>
<div class="t" style="left:954.4px;top:339.2px;width:300px;text-align:center;font-size:12px;line-height:16px;color:#323338;font-weight:normal;"><span style="display:inline-block;transform:scaleX(0.86)">4 days</span></div>
<div class="a" style="left:176.4px;top:368px;width:12.4px;height:12.4px;border:1px solid #d3d5dd;border-radius:2px;background:#fff"></div>
<div class="t" style="left:198.4px;top:367.2px;font-size:12px;line-height:16px;color:#323338;font-weight:normal;transform:scaleX(0.9);transform-origin:0 50%;">Confirm Attendance</div>
<svg style="left:376.1px;top:366.2px" width="16" height="16" viewBox="0 0 16 16"><path d="M8 1.4Q9.6 6.4 14.6 8 9.6 9.6 8 14.6 6.4 9.6 1.4 8 6.4 6.4 8 1.4z" fill="none" stroke="#4e4f59" stroke-width="1.35" stroke-linejoin="round"/></svg>
<svg style="left:402.9px;top:365.9px" width="16" height="16" viewBox="0 0 16 16"><path d="M8.2 1.8a6.1 6.1 0 1 1-3.2 11.3L2 14l.9-2.9A6.1 6.1 0 0 1 8.2 1.8z" fill="none" stroke="#4e4f59" stroke-width="1.35" stroke-linejoin="round"/><path d="M8.2 5.3v5.2M5.6 7.9h5.2" stroke="#4e4f59" stroke-width="1.35" stroke-linecap="round"/></svg>
<div class="a" style="left:437.1px;top:361.3px;width:116.9px;height:26.4px;background:#5fcd9e;"></div>
<div class="t" style="left:345.55px;top:367.2px;width:300px;text-align:center;font-size:12px;line-height:16px;color:#d4f1e3;font-weight:normal;"><span style="display:inline-block;transform:scaleX(0.9)">Done</span></div>
<div class="a" style="left:555.2px;top:361.3px;width:107.3px;height:26.4px;background:#7052b7;"></div>
<div class="t" style="left:458.85px;top:367.2px;width:300px;text-align:center;font-size:12px;line-height:16px;color:#f4f4f6;font-weight:normal;"><span style="display:inline-block;transform:scaleX(0.9)">High</span></div>
<div class="t" style="left:554.4px;top:367px;width:300px;text-align:center;font-size:12px;line-height:16px;color:#323338;font-weight:normal;"><span style="display:inline-block;transform:scaleX(0.88)">$10,000</span></div>
<div class="a" style="left:758.6px;top:365.9px;width:143.1px;height:16.6px;border-radius:8.3px;background:#00c875"></div>
<svg style="left:766px;top:369.2px" width="12" height="10" viewBox="0 0 12 10"><path d="M1.5 5.2L4.5 8 10.5 1.8" fill="none" stroke="#fff" stroke-width="1.5" stroke-linecap="round" stroke-linejoin="round"/></svg>
<div class="t" style="left:688px;top:367px;width:300px;text-align:center;font-size:11.5px;line-height:16px;color:#fff;font-weight:normal;-webkit-text-stroke:0.3px #fff"><span style="display:inline-block;transform:scaleX(0.92)">Aug 20 - 21</span></div>
<div class="a dep" style="left:935.58px;top:365.9px;width:103.05px;height:16.6px;background:#cce5ff;border-radius:2px"></div>
<div class="t" style="left:837.1px;top:367px;width:300px;text-align:center;font-size:12px;line-height:16px;color:#323338;font-weight:normal;"><span style="display:inline-block;transform:scaleX(0.91)">Prepare Questions</span></div>
<div class="t" style="left:954.4px;top:367px;width:300px;text-align:center;font-size:12px;line-height:16px;color:#323338;font-weight:normal;"><span style="display:inline-block;transform:scaleX(0.86)">2 days</span></div>
<div class="a" style="left:176.4px;top:395.8px;width:12.4px;height:12.4px;border:1px solid #d3d5dd;border-radius:2px;background:#fff"></div>
<div class="t" style="left:198.4px;top:395px;font-size:12px;line-height:16px;color:#323338;font-weight:normal;transform:scaleX(0.9);transform-origin:0 50%;">Share Interview Guide</div>
<svg style="left:376.1px;top:394px" width="16" height="16" viewBox="0 0 16 16"><path d="M8 1.4Q9.6 6.4 14.6 8 9.6 9.6 8 14.6 6.4 9.6 1.4 8 6.4 6.4 8 1.4z" fill="none" stroke="#4e4f59" stroke-width="1.35" stroke-linejoin="round"/></svg>
<svg style="left:402.9px;top:393.7px" width="16" height="16" viewBox="0 0 16 16"><path d="M8.2 1.8a6.1 6.1 0 1 1-3.2 11.3L2 14l.9-2.9A6.1 6.1 0 0 1 8.2 1.8z" fill="none" stroke="#4e4f59" stroke-width="1.35" stroke-linejoin="round"/><path d="M8.2 5.3v5.2M5.6 7.9h5.2" stroke="#4e4f59" stroke-width="1.35" stroke-linecap="round"/></svg>
<div class="a" style="left:437.1px;top:389.1px;width:116.9px;height:26.4px;background:#fdab3d;"></div>
<div class="t" style="left:345.55px;top:395px;width:300px;text-align:center;font-size:12px;line-height:16px;color:#f4f4f6;font-weight:normal;"><span style="display:inline-block;transform:scaleX(0.9)">Working on it</span></div>
<div class="a" style="left:555.2px;top:389.1px;width:107.3px;height:26.4px;background:#401694;"></div>
<div class="t" style="left:458.85px;top:395px;width:300px;text-align:center;font-size:12px;line-height:16px;color:#f4f4f6;font-weight:normal;"><span style="display:inline-block;transform:scaleX(0.9)">High</span></div>
<div class="a" style="left:758.6px;top:393.7px;width:143.1px;height:16.6px;border-radius:8.3px;background:#333333"></div>
<div class="t" style="left:680.2px;top:394.8px;width:300px;text-align:center;font-size:11.5px;line-height:16px;color:#fff;font-weight:normal;-webkit-text-stroke:0.3px #fff"><span style="display:inline-block;transform:scaleX(0.92)">Aug 22 - 26</span></div>
<div class="a dep" style="left:932.85px;top:393.7px;width:108.51px;height:16.6px;background:#cce5ff;border-radius:2px"></div>
<div class="t" style="left:837.1px;top:394.8px;width:300px;text-align:center;font-size:12px;line-height:16px;color:#323338;font-weight:normal;"><span style="display:inline-block;transform:scaleX(0.91)">Confirm Attendance</span></div>
<div class="t" style="left:954.4px;top:394.8px;width:300px;text-align:center;font-size:12px;line-height:16px;color:#323338;font-weight:normal;"><span style="display:inline-block;transform:scaleX(0.86)">5 days</span></div>
<svg style="left:112.6px;top:426.3px" width="10" height="7" viewBox="0 0 10 7"><path d="M1.3 1.5L5 5.2 8.7 1.5" fill="none" stroke="#323338" stroke-width="1.6" stroke-linecap="round" stroke-linejoin="round"/></svg>
<div class="a" style="left:133px;top:423.6px;width:12.4px;height:12.4px;border:1px solid #d3d5dd;border-radius:2px;background:#fff"></div>
<div class="t" style="left:155px;top:422.8px;font-size:12px;line-height:16px;color:#323338;font-weight:normal;transform:scaleX(0.9);transform-origin:0 50%;">Prepare Questions</div>
<div class="a" style="left:252.05px;top:423.5px;width:10px;height:13.6px;border-radius:2.5px;background:#e9eaee;font-size:10.5px;line-height:13.6px;text-align:center;color:#3a3b44">2</div>
<svg style="left:376.1px;top:421.8px" width="16" height="16" viewBox="0 0 16 16"><path d="M8 1.4Q9.6 6.4 14.6 8 9.6 9.6 8 14.6 6.4 9.6 1.4 8 6.4 6.4 8 1.4z" fill="none" stroke="#4e4f59" stroke-width="1.35" stroke-linejoin="round"/></svg>
<svg style="left:402.9px;top:421.5px" width="16" height="16" viewBox="0 0 16 16"><path d="M8.2 1.8a6.1 6.1 0 1 1-3.2 11.3L2 14l.9-2.9A6.1 6.1 0 0 1 8.2 1.8z" fill="none" stroke="#4e4f59" stroke-width="1.35" stroke-linejoin="round"/><path d="M8.2 5.3v5.2M5.6 7.9h5.2" stroke="#4e4f59" stroke-width="1.35" stroke-linecap="round"/></svg>
<div class="a" style="left:455.6px;top:421.2px;width:80.2px;height:17.2px;border-radius:3px;overflow:hidden;display:flex"><div style="width:80.2px;height:100%;background:#b5a5f5"></div></div>
<div class="a" style="left:573.6px;top:421.2px;width:70.5px;height:17.2px;border-radius:3px;overflow:hidden;display:flex"><div style="width:70.5px;height:100%;background:#5559df"></div></div>
<div class="a" style="left:678.2px;top:421.6px;width:52.5px;height:16.5px;border-radius:2px;background:#e2e2e5"></div>
<div class="t" style="left:684.5px;top:422.6px;font-size:12px;line-height:16px;color:#323338;font-weight:normal;transform:scaleX(0.86);transform-origin:0 50%;">$10,0...</div>
<div class="a" style="left:758.6px;top:421.5px;width:143.1px;height:16.6px;border-radius:8.3px;background:#333333"></div>
<div class="t" style="left:680.2px;top:422.6px;width:300px;text-align:center;font-size:11.5px;line-height:16px;color:#fff;font-weight:normal;-webkit-text-stroke:0.3px #fff"><span style="display:inline-block;transform:scaleX(0.92)">Aug 12 - 19</span></div>
<div class="a dep" style="left:934.66px;top:421.5px;width:104.88px;height:16.6px;background:#cce5ff;border-radius:2px"></div>
<div class="t" style="left:837.1px;top:422.6px;width:300px;text-align:center;font-size:12px;line-height:16px;color:#323338;font-weight:normal;"><span style="display:inline-block;transform:scaleX(0.91)">Schedule Sessions</span></div>
<div class="t" style="left:954.4px;top:422.6px;width:300px;text-align:center;font-size:12px;line-height:16px;color:#323338;font-weight:normal;"><span style="display:inline-block;transform:scaleX(0.86)">8 days</span></div>
<svg style="left:134.3px;top:454.1px" width="10" height="7" viewBox="0 0 10 7"><path d="M1.3 1.5L5 5.2 8.7 1.5" fill="none" stroke="#323338" stroke-width="1.6" stroke-linecap="round" stroke-linejoin="round"/></svg>
<div class="a" style="left:154.7px;top:451.4px;width:12.4px;height:12.4px;border:1px solid #d3d5dd;border-radius:2px;background:#fff"></div>
<div class="t" style="left:176.7px;top:450.6px;font-size:12px;line-height:16px;color:#323338;font-weight:normal;transform:scaleX(0.9);transform-origin:0 50%;">Review with team</div>
<div class="a" style="left:268.33px;top:451.3px;width:10px;height:13.6px;border-radius:2.5px;background:#e9eaee;font-size:10.5px;line-height:13.6px;text-align:center;color:#3a3b44">1</div>
<svg style="left:376.1px;top:449.6px" width="16" height="16" viewBox="0 0 16 16"><path d="M8 1.4Q9.6 6.4 14.6 8 9.6 9.6 8 14.6 6.4 9.6 1.4 8 6.4 6.4 8 1.4z" fill="none" stroke="#4e4f59" stroke-width="1.35" stroke-linejoin="round"/></svg>
<svg style="left:402.9px;top:449.3px" width="16" height="16" viewBox="0 0 16 16"><path d="M8.2 1.8a6.1 6.1 0 1 1-3.2 11.3L2 14l.9-2.9A6.1 6.1 0 0 1 8.2 1.8z" fill="none" stroke="#4e4f59" stroke-width="1.35" stroke-linejoin="round"/><path d="M8.2 5.3v5.2M5.6 7.9h5.2" stroke="#4e4f59" stroke-width="1.35" stroke-linecap="round"/></svg>
<div class="a" style="left:455.6px;top:449px;width:80.2px;height:17.2px;border-radius:3px;overflow:hidden;display:flex"><div style="width:80.2px;height:100%;background:#b5a5f5"></div></div>
<div class="a" style="left:573.6px;top:449px;width:70.5px;height:17.2px;border-radius:3px;overflow:hidden;display:flex"><div style="width:70.5px;height:100%;background:#5559df"></div></div>
<div class="a" style="left:678.2px;top:449.4px;width:52.5px;height:16.5px;border-radius:2px;background:#e2e2e5"></div>
<div class="t" style="left:684.5px;top:450.4px;font-size:12px;line-height:16px;color:#323338;font-weight:normal;transform:scaleX(0.86);transform-origin:0 50%;">$10,0...</div>
<div class="a" style="left:758.6px;top:449.3px;width:143.1px;height:16.6px;border-radius:8.3px;background:#333333"></div>
<div class="t" style="left:680.2px;top:450.4px;width:300px;text-align:center;font-size:11.5px;line-height:16px;color:#fff;font-weight:normal;-webkit-text-stroke:0.3px #fff"><span style="display:inline-block;transform:scaleX(0.92)">Aug 14 - 18</span></div>
<div class="a dep" style="left:934.66px;top:449.3px;width:104.88px;height:16.6px;background:#cce5ff;border-radius:2px"></div>
<div class="t" style="left:837.1px;top:450.4px;width:300px;text-align:center;font-size:12px;line-height:16px;color:#323338;font-weight:normal;"><span style="display:inline-block;transform:scaleX(0.91)">Schedule Sessions</span></div>
<div class="t" style="left:954.4px;top:450.4px;width:300px;text-align:center;font-size:12px;line-height:16px;color:#323338;font-weight:normal;"><span style="display:inline-block;transform:scaleX(0.86)">5 days</span></div>
<div class="a" style="left:176.4px;top:479.2px;width:12.4px;height:12.4px;border:1px solid #d3d5dd;border-radius:2px;background:#fff"></div>
<div class="t" style="left:198.4px;top:478.4px;font-size:12px;line-height:16px;color:#323338;font-weight:normal;transform:scaleX(0.9);transform-origin:0 50%;">Get final OK</div>
<svg style="left:376.1px;top:477.4px" width="16" height="16" viewBox="0 0 16 16"><defs><clipPath id="st2"><path d="M8 1.2Q9.8 6.2 14.8 8 9.8 9.8 8 14.8 6.2 9.8 1.2 8 6.2 6.2 8 1.2z"/></clipPath></defs><g clip-path="url(#st2)"><rect x="0" y="0" width="8" height="8" fill="#4f9bf5"/><rect x="8" y="0" width="8" height="8" fill="#2ccf8e"/><rect x="8" y="8" width="8" height="8" fill="#f0607a"/><rect x="0" y="8" width="8" height="8" fill="#7d66ee"/><path d="M8 8L16 6.2V8z" fill="#ffa53a"/><path d="M8 8L0 9.5V8z" fill="#3fb0e0"/></g></svg>
<svg style="left:402.9px;top:477.1px" width="16" height="16" viewBox="0 0 16 16"><path d="M8.2 1.8a6.1 6.1 0 1 1-3.2 11.3L2 14l.9-2.9A6.1 6.1 0 0 1 8.2 1.8z" fill="none" stroke="#4e4f59" stroke-width="1.35" stroke-linejoin="round"/><path d="M8.2 5.3v5.2M5.6 7.9h5.2" stroke="#4e4f59" stroke-width="1.35" stroke-linecap="round"/></svg>
<div class="a" style="left:437.1px;top:472.5px;width:116.9px;height:26.4px;background:#b5a5f5;"></div>
<div class="t" style="left:345.55px;top:478.4px;width:300px;text-align:center;font-size:12px;line-height:16px;color:#f4f4f6;font-weight:normal;"><span style="display:inline-block;transform:scaleX(0.9)">Future steps</span></div>
<div class="a" style="left:555.2px;top:472.5px;width:107.3px;height:26.4px;background:#5559df;"></div>
<div class="t" style="left:458.85px;top:478.4px;width:300px;text-align:center;font-size:12px;line-height:16px;color:#f4f4f6;font-weight:normal;"><span style="display:inline-block;transform:scaleX(0.9)">Medium</span></div>
<div class="t" style="left:554.4px;top:478.2px;width:300px;text-align:center;font-size:12px;line-height:16px;color:#323338;font-weight:normal;"><span style="display:inline-block;transform:scaleX(0.88)">$10,000</span></div>
<div class="a" style="left:758.6px;top:477.1px;width:143.1px;height:16.6px;border-radius:8.3px;background:#333333"></div>
<div class="t" style="left:680.2px;top:478.2px;width:300px;text-align:center;font-size:11.5px;line-height:16px;color:#fff;font-weight:normal;-webkit-text-stroke:0.3px #fff"><span style="display:inline-block;transform:scaleX(0.92)">Aug 27 - 28</span></div>
<div class="a dep" style="left:928.6px;top:477.1px;width:117px;height:16.6px;background:#cce5ff;border-radius:2px"></div>
<div class="t" style="left:837.1px;top:478.2px;width:300px;text-align:center;font-size:12px;line-height:16px;color:#323338;font-weight:normal;"><span style="display:inline-block;transform:scaleX(0.91)">Share Interview Gui...</span></div>
<div class="t" style="left:954.4px;top:478.2px;width:300px;text-align:center;font-size:12px;line-height:16px;color:#323338;font-weight:normal;"><span style="display:inline-block;transform:scaleX(0.86)">2 days</span></div>
<div class="a" style="left:154.7px;top:507px;width:12.4px;height:12.4px;border:1px solid #d3d5dd;border-radius:2px;background:#fff"></div>
<div class="t" style="left:176.7px;top:506.2px;font-size:12px;line-height:16px;color:#323338;font-weight:normal;transform:scaleX(0.9);transform-origin:0 50%;">Finalize template</div>
<svg style="left:376.1px;top:505.2px" width="16" height="16" viewBox="0 0 16 16"><path d="M8 1.4Q9.6 6.4 14.6 8 9.6 9.6 8 14.6 6.4 9.6 1.4 8 6.4 6.4 8 1.4z" fill="none" stroke="#4e4f59" stroke-width="1.35" stroke-linejoin="round"/></svg>
<svg style="left:402.9px;top:504.9px" width="16" height="16" viewBox="0 0 16 16"><path d="M8.2 1.8a6.1 6.1 0 1 1-3.2 11.3L2 14l.9-2.9A6.1 6.1 0 0 1 8.2 1.8z" fill="none" stroke="#4e4f59" stroke-width="1.35" stroke-linejoin="round"/><path d="M8.2 5.3v5.2M5.6 7.9h5.2" stroke="#4e4f59" stroke-width="1.35" stroke-linecap="round"/></svg>
<div class="a" style="left:437.1px;top:500.3px;width:116.9px;height:26.4px;background:#b5a5f5;"></div>
<div class="t" style="left:345.55px;top:506.2px;width:300px;text-align:center;font-size:12px;line-height:16px;color:#f4f4f6;font-weight:normal;"><span style="display:inline-block;transform:scaleX(0.9)">Future steps</span></div>
<div class="a" style="left:555.2px;top:500.3px;width:107.3px;height:26.4px;background:#5559df;"></div>
<div class="t" style="left:458.85px;top:506.2px;width:300px;text-align:center;font-size:12px;line-height:16px;color:#f4f4f6;font-weight:normal;"><span style="display:inline-block;transform:scaleX(0.9)">Medium</span></div>
<div class="a" style="left:758.6px;top:504.9px;width:143.1px;height:16.6px;border-radius:8.3px;background:#333333"></div>
<div class="t" style="left:680.2px;top:506px;width:300px;text-align:center;font-size:11.5px;line-height:16px;color:#fff;font-weight:normal;-webkit-text-stroke:0.3px #fff"><span style="display:inline-block;transform:scaleX(0.92)">Aug 29 - Sep 1</span></div>
<div class="a dep" style="left:951.36px;top:504.9px;width:71.48px;height:16.6px;background:#cce5ff;border-radius:2px"></div>
<div class="t" style="left:837.1px;top:506px;width:300px;text-align:center;font-size:12px;line-height:16px;color:#323338;font-weight:normal;"><span style="display:inline-block;transform:scaleX(0.91)">Get final OK</span></div>
<div class="t" style="left:954.4px;top:506px;width:300px;text-align:center;font-size:12px;line-height:16px;color:#323338;font-weight:normal;"><span style="display:inline-block;transform:scaleX(0.86)">4 days</span></div>
<div class="a" style="left:89.6px;top:534.8px;width:12.4px;height:12.4px;border:1px solid #d3d5dd;border-radius:2px;background:#fff"></div>
<div class="t" style="left:111.6px;top:534px;font-size:12px;line-height:16px;color:#323338;font-weight:normal;transform:scaleX(0.9);transform-origin:0 50%;">UI/UX Wireframes</div>
<svg style="left:376.1px;top:533px" width="16" height="16" viewBox="0 0 16 16"><path d="M8 1.4Q9.6 6.4 14.6 8 9.6 9.6 8 14.6 6.4 9.6 1.4 8 6.4 6.4 8 1.4z" fill="none" stroke="#4e4f59" stroke-width="1.35" stroke-linejoin="round"/></svg>
<svg style="left:402.9px;top:532.7px" width="16" height="16" viewBox="0 0 16 16"><path d="M8.2 1.8a6.1 6.1 0 1 1-3.2 11.3L2 14l.9-2.9A6.1 6.1 0 0 1 8.2 1.8z" fill="none" stroke="#4e4f59" stroke-width="1.35" stroke-linejoin="round"/><path d="M8.2 5.3v5.2M5.6 7.9h5.2" stroke="#4e4f59" stroke-width="1.35" stroke-linecap="round"/></svg>
<div class="a" style="left:437.1px;top:528.1px;width:116.9px;height:26.4px;background:#fdab3d;"></div>
<div class="t" style="left:345.55px;top:534px;width:300px;text-align:center;font-size:12px;line-height:16px;color:#f4f4f6;font-weight:normal;"><span style="display:inline-block;transform:scaleX(0.9)">Working on it</span></div>
<div class="a" style="left:555.2px;top:528.1px;width:107.3px;height:26.4px;background:#579bfc;"></div>
<div class="t" style="left:458.85px;top:534px;width:300px;text-align:center;font-size:12px;line-height:16px;color:#f4f4f6;font-weight:normal;"><span style="display:inline-block;transform:scaleX(0.9)">Low</span></div>
<div class="a" style="left:758.6px;top:532.7px;width:143.1px;height:16.6px;border-radius:8.3px;background:#333333"></div>
<div class="t" style="left:680.2px;top:533.8px;width:300px;text-align:center;font-size:11.5px;line-height:16px;color:#fff;font-weight:normal;-webkit-text-stroke:0.3px #fff"><span style="display:inline-block;transform:scaleX(0.92)">Sep 10 - 24</span></div>
<div class="a dep" style="left:927.69px;top:532.7px;width:118.82px;height:16.6px;background:#cce5ff;border-radius:2px"></div>
<div class="t" style="left:837.1px;top:533.8px;width:300px;text-align:center;font-size:12px;line-height:16px;color:#323338;font-weight:normal;"><span style="display:inline-block;transform:scaleX(0.91)">User Persona Devel...</span></div>
<div class="t" style="left:954.4px;top:533.8px;width:300px;text-align:center;font-size:12px;line-height:16px;color:#323338;font-weight:normal;"><span style="display:inline-block;transform:scaleX(0.86)">15 days</span></div>
<svg style="left:497.5px;top:371.5px" width="13" height="14" viewBox="0 0 13 14"><path d="M3 1.3Q3.9 0.3 4.9 1.3V6.2L6.3 6 7.8 6.3 9.3 6.8 10.7 7.3Q11.9 7.8 11.6 9.3L10.8 12.6 5.6 13.4 1.6 9.6Q0.8 8.6 2 8.1L3 8.6z" fill="#fff" stroke="#222" stroke-width="1" stroke-linejoin="round"/><path d="M6.4 9.5v2M8 9.5v2M9.6 9.5v2" stroke="#555" stroke-width=".7"/></svg>
<div class="t" style="left:89.2px;top:561.6px;font-size:12px;line-height:16px;color:#676879;font-weight:normal;transform:scaleX(0.91);transform-origin:0 50%;">+ Add task</div>
<div class="a" style="left:442.9px;top:587.8px;width:105.1px;height:20px;display:flex"><div style="width:20.9px;background:#00c875"></div><div style="width:43px;background:#fdab3d"></div><div style="width:41.2px;background:#b5a5f5"></div></div>
<div class="a" style="left:561.2px;top:587.8px;width:95.1px;height:20px;display:flex"><div style="width:19.2px;background:#579bfc"></div><div style="width:38.6px;background:#5559df"></div><div style="width:37.3px;background:#401694"></div></div>
<div class="t" style="left:554.4px;top:586.4px;width:300px;text-align:center;font-size:12px;line-height:16px;color:#323338;font-weight:normal;"><span style="display:inline-block;transform:scaleX(0.88)">$20,000</span></div>
<div class="t" style="left:554.4px;top:599px;width:300px;text-align:center;font-size:9px;line-height:10px;color:#676879;font-weight:normal;"><span style="display:inline-block;transform:scaleX(0.9)">sum</span></div>
<div class="a" style="left:758.6px;top:588.7px;width:143.1px;height:17.4px;border-radius:8.7px;background:#333"></div>
<div class="t" style="left:680.2px;top:589.6px;width:300px;text-align:center;font-size:11.5px;line-height:16px;color:#fff;font-weight:normal;-webkit-text-stroke:0.3px #fff"><span style="display:inline-block;transform:scaleX(0.92)">Jul 31 - Sep 24</span></div>
<div class="t" style="left:954.4px;top:586.4px;width:300px;text-align:center;font-size:12px;line-height:16px;color:#323338;font-weight:normal;"><span style="display:inline-block;transform:scaleX(0.86)">68 days</span></div>
<div class="t" style="left:954.4px;top:599px;width:300px;text-align:center;font-size:9px;line-height:10px;color:#676879;font-weight:normal;"><span style="display:inline-block;transform:scaleX(0.9)">sum</span></div>
<div class="a" style="left:27px;top:605.8px;width:1125px;height:8.2px;background:#ebebef;"></div>
<div class="a" style="left:27px;top:605.8px;width:748.7px;height:8.2px;background:#b4b7c6;"></div>
<div class="a" style="left:27px;top:596px;width:1125px;height:10px;background:linear-gradient(180deg,rgba(40,40,60,0),rgba(40,40,60,.07))"></div>
<div class="a" style="left:0px;top:614px;width:1152px;height:34px;background:#fff;"></div>
<div class="a" style="left:0;top:614px;width:1152px;height:6px;background:linear-gradient(180deg,rgba(40,40,60,.05),rgba(40,40,60,0))"></div>
</body></html>
